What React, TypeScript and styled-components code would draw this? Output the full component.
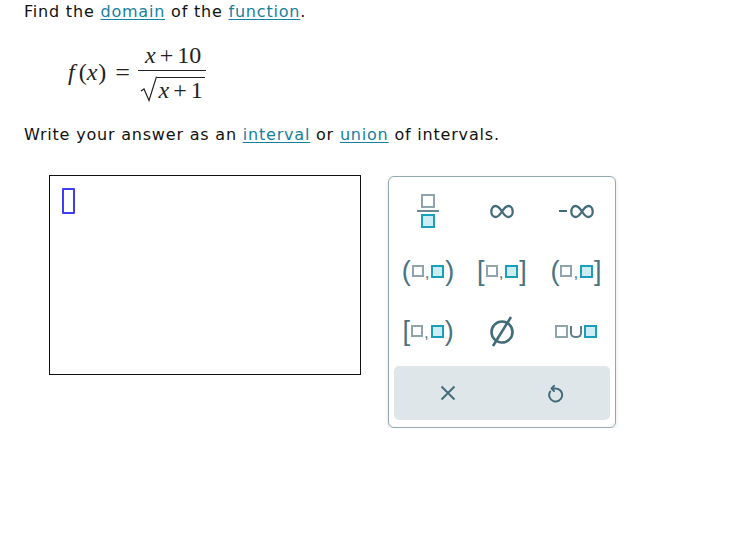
import styled, { createGlobalStyle } from "styled-components";

const GlobalStyle = createGlobalStyle`
  body {
    margin: 0;
    background: #fff;
    font-family: "DejaVu Sans", Verdana, sans-serif;
    color: #111;
  }
`;

const Page = styled.div`
  padding: 2px 0 0 24px;
`;

const Line = styled.p<{ $top: number }>`
  margin: ${(p) => p.$top}px 0 0;
  font-size: 16px;
  line-height: 19px;
  letter-spacing: 0.8px;
`;

const Link = styled.a`
  color: #17809e;
  text-decoration: underline;
  text-underline-offset: 2px;
`;

const Formula = styled.div`
  display: flex;
  align-items: center;
  margin: 22px 0 0 44px;
  font-family: "Liberation Serif", "Times New Roman", serif;
  font-size: 24px;
  color: #222;
`;

const I = styled.i<{ $gap?: number }>`
  font-style: italic;
  margin-right: ${(p) => p.$gap ?? 0}px;
`;

const Eq = styled.span`
  margin: 0 8px 0 9px;
  font-size: 26px;
`;

const Frac = styled.span`
  display: inline-flex;
  flex-direction: column;
  align-items: center;
`;

const Num = styled.span`
  padding: 0 5px 2px 7px;
  line-height: 25px;
  border-bottom: 1px solid #222;
`;

const Den = styled.span`
  display: flex;
  align-items: flex-end;
  margin-top: 5px;
`;

const Radicand = styled.span`
  border-top: 1px solid #222;
  line-height: 24px;
  padding: 0 2px;
`;

const Op = styled.span`
  margin: 0 4px;
`;

const Workspace = styled.div`
  display: flex;
  align-items: flex-start;
  margin-top: 31px;
`;

const AnswerBox = styled.div`
  box-sizing: border-box;
  width: 312px;
  height: 200px;
  margin-left: 25px;
  padding: 12px;
  border: 1px solid #111;
`;

const Cursor = styled.div`
  box-sizing: border-box;
  width: 13px;
  height: 26px;
  border: 2px solid #3d3df2;
  border-radius: 1px;
`;

const Keypad = styled.div`
  box-sizing: border-box;
  width: 228px;
  height: 252px;
  margin: 1px 0 0 27px;
  padding: 4px 2px 7px;
  border: 1px solid #93a8b0;
  border-radius: 6px;
  box-shadow: 0 2px 4px rgba(0, 0, 0, 0.12);
  display: flex;
  flex-direction: column;
`;

const KeyGrid = styled.div`
  display: grid;
  grid-template-columns: repeat(3, 1fr);
  grid-auto-rows: 60px;
`;

const Key = styled.button`
  display: flex;
  align-items: center;
  justify-content: center;
  border: none;
  background: transparent;
  padding: 0;
  color: #436c7a;
  font-family: "Liberation Sans", Arial, sans-serif;
  cursor: pointer;
`;

const ActionBar = styled.div`
  display: grid;
  grid-template-columns: 1fr 1fr;
  height: 54px;
  margin: 5px 3px 0 3px;
  background: #dfe6e9;
  border-radius: 5px;
`;

const Slot = styled.span<{ $teal?: boolean; $size: number }>`
  display: inline-block;
  box-sizing: border-box;
  width: ${(p) => p.$size}px;
  height: ${(p) => p.$size}px;
  border: 2px solid ${(p) => (p.$teal ? "#1a9fba" : "#8fa4ac")};
  background: ${(p) => (p.$teal ? "#ccedf4" : "#fff")};
`;

const Stack = styled.span`
  display: flex;
  flex-direction: column;
  align-items: center;
  gap: 2px;
`;

const StackBar = styled.span`
  width: 22px;
  height: 2px;
  background: #6c8893;
`;

const Paren = styled.span`
  font-size: 27px;
  line-height: 30px;
  color: #4a7382;
  margin: 0 1px;
`;

const Comma = styled.span`
  font-size: 17px;
  align-self: flex-end;
  line-height: 27px;
  margin: 0 2px 0 1px;
  color: #4a7382;
`;

const IntervalWrap = styled.span`
  display: flex;
  align-items: center;
`;

const Dash = styled.span`
  width: 8px;
  height: 2.5px;
  background: #436c7a;
  margin-right: 3px;
`;

const Cup = styled.span`
  width: 8px;
  height: 10px;
  margin: 2px 2px 0;
  border: 2px solid #5d7f8b;
  border-top: none;
  border-radius: 0 0 5px 5px;
`;

const Infinity = () => (
  <svg width="24" height="15" viewBox="0 0 24 14" fill="none" stroke="#436c7a" strokeWidth="2.3">
    <path d="M12 7 C9.5 3 7.5 1.5 5.5 1.5 C3 1.5 1.3 4 1.3 7 C1.3 10 3 12.5 5.5 12.5 C7.5 12.5 9.5 11 12 7 C14.5 3 16.5 1.5 18.5 1.5 C21 1.5 22.7 4 22.7 7 C22.7 10 21 12.5 18.5 12.5 C16.5 12.5 14.5 11 12 7 Z" />
  </svg>
);

const Interval = ({ left, right }: { left: string; right: string }) => (
  <IntervalWrap>
    <Paren>{left}</Paren>
    <Slot $size={12} />
    <Comma>,</Comma>
    <Slot $size={13} $teal />
    <Paren>{right}</Paren>
  </IntervalWrap>
);

export default function App() {
  return (
    <>
      <GlobalStyle />
      <Page>
        <Line $top={0}>
          Find the <Link>domain</Link> of the <Link>function</Link>.
        </Line>
        <Formula>
          <span>
            <I $gap={4}>f</I>(<I $gap={1}>x</I>)
          </span>
          <Eq>=</Eq>
          <Frac>
            <Num>
              <I>x</I>
              <Op>+</Op>10
            </Num>
            <Den>
              <svg width="17" height="26" viewBox="0 0 17 26" fill="none" stroke="#222" strokeWidth="1.2">
                <path d="M1 15 L4 13 L9 24.5 L16.5 0.6" />
              </svg>
              <Radicand>
                <I>x</I>
                <Op>+</Op>1
              </Radicand>
            </Den>
          </Frac>
        </Formula>
        <Line $top={23}>
          Write your answer as an <Link>interval</Link> or <Link>union</Link> of intervals.
        </Line>
        <Workspace>
          <AnswerBox>
            <Cursor />
          </AnswerBox>
          <Keypad>
            <KeyGrid>
              <Key>
                <Stack>
                  <Slot $size={14} />
                  <StackBar />
                  <Slot $size={14} $teal />
                </Stack>
              </Key>
              <Key>
                <Infinity />
              </Key>
              <Key>
                <Dash />
                <Infinity />
              </Key>
              <Key>
                <Interval left="(" right=")" />
              </Key>
              <Key>
                <Interval left="[" right="]" />
              </Key>
              <Key>
                <Interval left="(" right="]" />
              </Key>
              <Key>
                <Interval left="[" right=")" />
              </Key>
              <Key>
                <svg width="28" height="32" viewBox="0 0 28 32" fill="none" stroke="#436c7a" strokeWidth="2.6">
                  <circle cx="14" cy="17" r="10.5" />
                  <line x1="5" y1="31" x2="23" y2="2" />
                </svg>
              </Key>
              <Key>
                <IntervalWrap>
                  <Slot $size={13} />
                  <Cup />
                  <Slot $size={13} $teal />
                </IntervalWrap>
              </Key>
            </KeyGrid>
            <ActionBar>
              <Key>
                <svg width="16" height="16" viewBox="0 0 16 16" fill="none" stroke="#436c7a" strokeWidth="2">
                  <path d="M1.5 1.5 L14.5 14.5 M14.5 1.5 L1.5 14.5" />
                </svg>
              </Key>
              <Key>
                <svg width="18" height="20" viewBox="0 0 18 20" fill="none" stroke="#436c7a" strokeWidth="2" strokeLinecap="round" strokeLinejoin="round">
                  <path d="M3.2 8.5 A6.5 6.5 0 1 0 8.5 5.5 L5 5.5" />
                  <path d="M7 2.8 L4.6 5.5 L7 8" />
                </svg>
              </Key>
            </ActionBar>
          </Keypad>
        </Workspace>
      </Page>
    </>
  );
}
